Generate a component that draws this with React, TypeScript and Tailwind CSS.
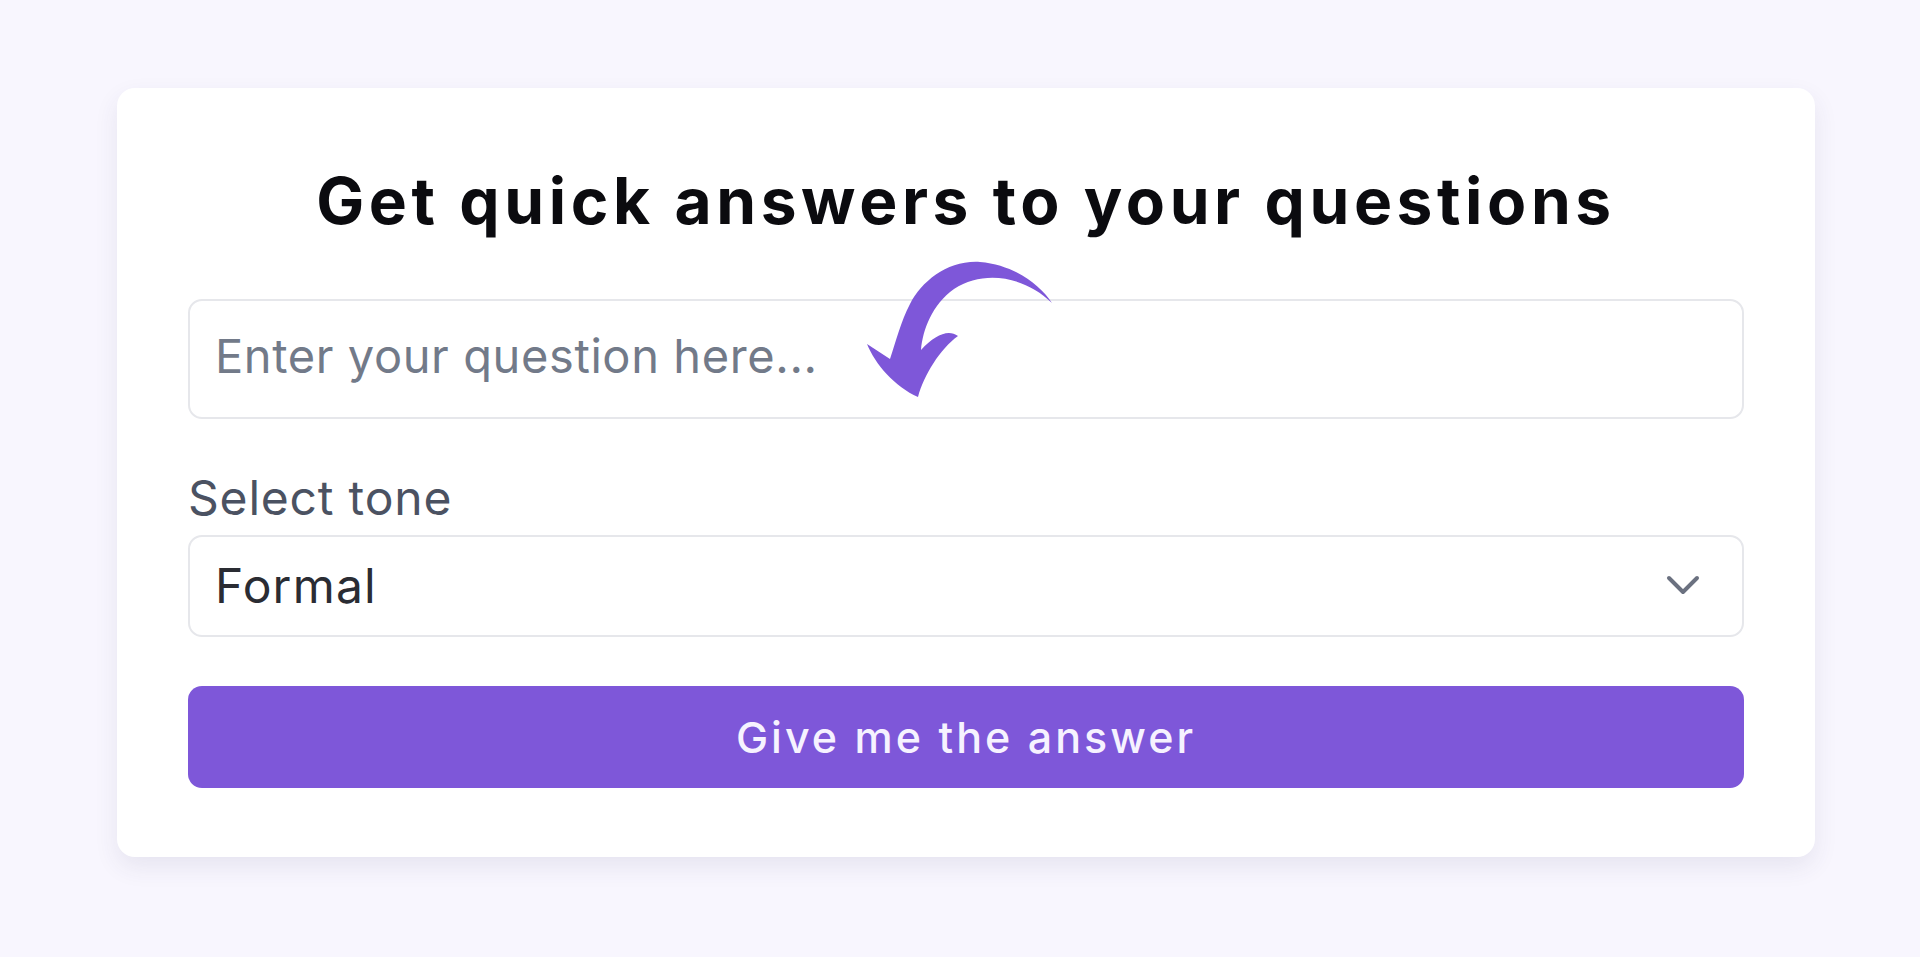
import { useState } from 'react';

const font = { fontFamily: 'Inter, "Noto Sans", sans-serif' };

function CurvedArrow() {
  // drawn in the coordinates of the 240x170 area it covers
  return (
    <svg
      width="240"
      height="170"
      viewBox="0 0 240 170"
      className="absolute left-[652px] top-[-50px] pointer-events-none"
    >
      <path
        d="M212 54 C200 36 175 16 140 13 C108 11 82 32 70 55 C61 72 56 92 50 110 L27 95 C35 115 55 138 78 148 C84 126 100 100 118 87 C108 80 95 86 81 101 C83 80 92 56 114 40 C145 20 185 28 212 54 Z"
        fill="#7e57d9"
      />
    </svg>
  );
}

export default function App() {
  const [question, setQuestion] = useState('');
  const [tone, setTone] = useState('Formal');

  return (
    <div className="min-h-screen bg-[#f8f6fe] pt-[88px] pl-[117px]" style={font}>
      <div className="w-[1698px] rounded-[18px] bg-white px-[71px] pt-[77px] pb-[69px] shadow-[0_10px_24px_rgba(60,50,100,0.09)]">
        <h1 className="text-center text-[64px] leading-[72px] font-bold text-[#0b0b0f] tracking-[4.6px]">
          Get quick answers to your questions
        </h1>

        <div className="relative mt-[62px]">
          <input
            type="text"
            value={question}
            onChange={(e) => setQuestion(e.target.value)}
            placeholder="Enter your question here..."
            className="block w-full h-[120px] rounded-[14px] border-2 border-[#e6e7eb] bg-white px-[25px] pb-[8px] text-[47px] tracking-[0.6px] text-[#1f2937] placeholder:text-[#727a89] outline-none"
          />
          <CurvedArrow />
        </div>

        <label className="block mt-[50px] text-[48px] leading-[58px] tracking-[0.8px] text-[#4b5262]">Select tone</label>

        <div className="relative mt-[8px]">
          <select
            value={tone}
            onChange={(e) => setTone(e.target.value)}
            className="block w-full h-[102px] appearance-none rounded-[14px] border-2 border-[#e6e7eb] bg-white px-[25px] text-[48px] tracking-[1.2px] text-[#2a2c33] outline-none"
          >
            <option>Formal</option>
            <option>Casual</option>
            <option>Friendly</option>
          </select>
          <svg
            width="34"
            height="20"
            viewBox="0 0 34 20"
            className="absolute right-[44px] top-[40px] pointer-events-none"
          >
            <polyline points="3,3 17,17 31,3" fill="none" stroke="#6b7180" strokeWidth="4" strokeLinecap="round" strokeLinejoin="round" />
          </svg>
        </div>

        <button className="mt-[49px] block w-full h-[102px] rounded-[14px] bg-[#7e57d9] text-[43px] tracking-[3px] font-medium text-[#f6f2ff]">
          Give me the answer
        </button>
      </div>
    </div>
  );
}
